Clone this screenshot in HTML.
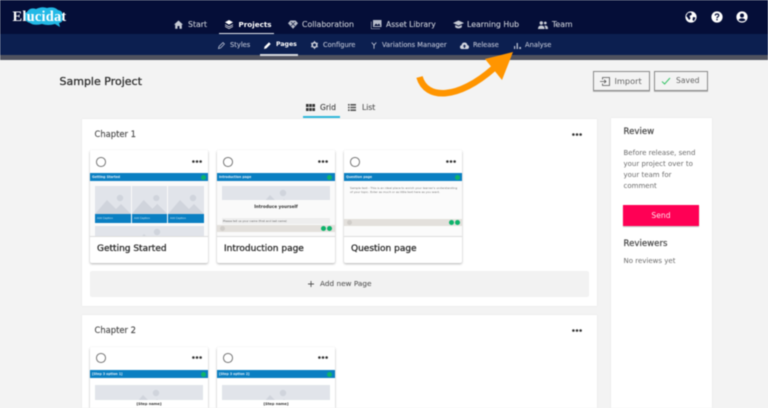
<!DOCTYPE html>
<html><head><meta charset="utf-8"><style>
html,body{margin:0;padding:0;width:768px;height:408px;overflow:hidden;background:#f3f3f3}
#r{position:relative;width:768px;height:408px;overflow:hidden;filter:blur(.45px);font-family:"DejaVu Sans","Liberation Sans",sans-serif;background:#f3f3f3}
#r div,#r span,#r svg{position:absolute}
.t{white-space:nowrap;line-height:12px;height:12px}
.n{font-size:7.8px;color:#c6cad4;-webkit-text-stroke:.12px #c6cad4}
.s{font-size:6.7px;color:#b8bed0;-webkit-text-stroke:.12px #b8bed0}
.card{background:#fff;box-shadow:0 0 2px rgba(0,0,0,.08)}
.pg{background:#fff;width:118px;border-radius:2px;box-shadow:0 1px 2px rgba(0,0,0,.3);overflow:hidden}
.ttl{font-size:9px;color:#2e2e2e;-webkit-text-stroke:.3px #2e2e2e}
.b{background:#0a7fc2;left:0;right:0;height:8px;top:23px}
.bt{font-size:3.2px;color:#dcebf6;left:2px;top:23px;line-height:8px;white-space:nowrap;font-weight:bold}
.gd{width:5px;height:5px;border-radius:50%;background:#0db36b}
.circ{width:7.6px;height:7.6px;border:1px solid #777;border-radius:50%;left:6px;top:7px}
.im{background:#e1e4ea;overflow:hidden}
.cap{background:#0a7fc2}
.ct{font-size:2.6px;line-height:9px;color:#cfe4f2;white-space:nowrap}
</style></head><body><div id="r">
<svg width="0" height="0" style="position:absolute"><defs>
<symbol id="ph" viewBox="0 0 36 27"><circle cx="25" cy="11" r="3.2" fill="#d0d4dc"/><path d="M0 27 L12 13 L21 22 L26 17 L36 27Z" fill="#d0d4dc"/></symbol>
<symbol id="dots" viewBox="0 0 10 3"><circle cx="1.4" cy="1.5" r="1.3" fill="#333"/><circle cx="5" cy="1.5" r="1.3" fill="#333"/><circle cx="8.6" cy="1.5" r="1.3" fill="#333"/></symbol>
</defs></svg>

<!-- top nav -->
<div style="left:0;top:0;width:768px;height:34px;background:#050e38"></div>
<div style="left:0;top:34px;width:768px;height:21px;background:#0c1f50"></div>
<div style="left:0;top:55px;width:768px;height:5px;background:#50525f"></div>

<!-- logo -->
<svg style="left:22px;top:6px" width="44" height="22" viewBox="0 0 44 22"><path d="M5 6 Q8 1 14 3 Q20 0 25 2 Q32 0 36 4 Q42 5 40 11 Q42 16 37 17 L38 21 L33 18 Q26 20 20 18 Q12 20 8 17 Q2 15 3 10 Q2 7 5 6Z" fill="#22b9e6"/></svg>
<span class="t" style="left:12.5px;top:9px;line-height:16px;height:16px;font:bold 14.4px/16px 'Liberation Serif',serif;color:#fff;letter-spacing:.25px">Elucidat</span>

<!-- main nav icons -->
<svg style="left:174px;top:20px" width="9" height="9" viewBox="0 0 9 9"><path d="M4.5 .5 L9 4.6 H7.8 V8.7 H5.5 V6 H3.5 V8.7 H1.2 V4.6 H0Z" fill="#c6cad4"/></svg>
<span class="t n" style="left:188px;top:18.5px">Start</span>
<svg style="left:225px;top:20px" width="8" height="9" viewBox="0 0 8 9"><path d="M4 0 L8 2.3 4 4.6 0 2.3Z M0 4.2 L4 6.4 8 4.2 8 5 4 7.2 0 5Z M0 6 L4 8.2 8 6 8 6.7 4 9 0 6.7Z" fill="#fff"/></svg>
<span class="t n" style="left:238.5px;top:18.5px;color:#fff;-webkit-text-stroke:0;font-weight:bold;font-size:7.2px">Projects</span>
<div style="left:219px;top:33px;width:55px;height:1px;background:#e3e5ea"></div>
<svg style="left:288px;top:20px" width="10" height="9" viewBox="0 0 10 9"><path d="M2.5 .5 H7.5 L10 3.2 5 8.8 0 3.2Z" fill="#b5bac8"/><path d="M3 2 L7 6 M7 2 L3 6" stroke="#050e38" stroke-width=".6"/></svg>
<span class="t n" style="left:302px;top:18.5px">Collaboration</span>
<svg style="left:371px;top:20px" width="11" height="9" viewBox="0 0 11 9"><path d="M2 0 H10.5 V7 H2Z" fill="#b5bac8"/><path d="M0 1.5 V9 H9" fill="none" stroke="#b5bac8"/><path d="M3 6 L5 3.5 6.5 5 8 3.5 9.5 6Z" fill="#050e38"/></svg>
<span class="t n" style="left:386px;top:18.5px;font-size:7.6px">Asset Library</span>
<svg style="left:453px;top:20px" width="11" height="9" viewBox="0 0 11 9"><path d="M5.5 .5 L11 3 5.5 5.5 0 3Z M2.2 5 L5.5 6.5 8.8 5 V7.2 Q5.5 9.6 2.2 7.2Z" fill="#c6cad4"/></svg>
<span class="t n" style="left:467px;top:18.5px">Learning Hub</span>
<svg style="left:538px;top:20.5px" width="10" height="8" viewBox="0 0 10 8"><circle cx="3.3" cy="2" r="1.7" fill="#c6cad4"/><circle cx="7.3" cy="2" r="1.4" fill="#c6cad4"/><path d="M0 8 Q0 4.5 3.3 4.5 Q6.6 4.5 6.6 8Z M7.4 8 Q7.4 5.6 6.5 4.6 Q10 4 10 8Z" fill="#c6cad4"/></svg>
<span class="t n" style="left:552px;top:18.5px">Team</span>

<!-- right icons -->
<svg style="left:685px;top:11px" width="12" height="12" viewBox="0 0 12 12"><circle cx="6" cy="6" r="5.6" fill="#fff"/><path d="M3 2 L6 1.5 7 3.5 4.5 5 5.5 7.5 4 9 2.5 6.5 1.2 5Z M8 6 L10.5 6.5 9 10 7.5 9Z" fill="#050e38"/></svg>
<svg style="left:711px;top:11px" width="12" height="12" viewBox="0 0 12 12"><circle cx="6" cy="6" r="5.6" fill="#fff"/><path d="M4.2 4.6 Q4.3 3 6 3 Q7.8 3 7.8 4.5 Q7.8 5.4 6.7 5.9 Q6 6.3 6 7.2" fill="none" stroke="#050e38" stroke-width="1.2"/><rect x="5.3" y="8" width="1.4" height="1.3" fill="#050e38"/></svg>
<svg style="left:736px;top:11px" width="12" height="12" viewBox="0 0 12 12"><circle cx="6" cy="6" r="5.6" fill="#fff"/><circle cx="6" cy="4.5" r="2" fill="#050e38"/><path d="M2.5 9.3 Q3.4 7.2 6 7.2 Q8.6 7.2 9.5 9.3 Q6 11.5 2.5 9.3Z" fill="#050e38"/></svg>

<!-- sub nav -->
<svg style="left:218px;top:41.5px" width="7" height="7" viewBox="0 0 7 7"><path d="M.5 6.5 L1 4.5 5 .6 6.4 2 2.5 6Z" fill="none" stroke="#b8bed0" stroke-width=".8"/></svg>
<span class="t s" style="left:230px;top:39px">Styles</span>
<svg style="left:264px;top:41.5px" width="7" height="7" viewBox="0 0 7 7"><path d="M0 7 L.6 4.6 5 .3 6.7 2 2.4 6.4Z" fill="#fff"/></svg>
<span class="t s" style="left:276px;top:39px;color:#fff;-webkit-text-stroke:0;font-weight:bold;font-size:6.2px">Pages</span>
<div style="left:260px;top:54px;width:38px;height:2px;background:#d6d8de"></div>
<svg style="left:311px;top:41px" width="7" height="8" viewBox="0 0 7 8"><circle cx="3.5" cy="4" r="2.3" fill="none" stroke="#c8ccd8" stroke-width="1.6"/><path d="M3.5 0 V1.5 M3.5 6.5 V8 M0 2 L1.3 2.8 M7 2 L5.7 2.8 M0 6 L1.3 5.2 M7 6 L5.7 5.2" stroke="#c8ccd8"/></svg>
<span class="t s" style="left:323px;top:39px">Configure</span>
<svg style="left:371px;top:41.5px" width="6" height="7" viewBox="0 0 6 7"><path d="M.7 .5 L3 3.2 5.3 .5 M3 3.2 V6.8" fill="none" stroke="#b8bed0" stroke-width=".9"/></svg>
<span class="t s" style="left:382px;top:39px;font-size:6.7px">Variations Manager</span>
<svg style="left:460px;top:41.5px" width="9" height="7" viewBox="0 0 9 7"><path d="M2 7 Q0 7 0 5 Q0 3.4 1.5 3.2 Q2 .5 4.5 .5 Q7 .5 7.3 3 Q9 3.3 9 5 Q9 7 7 7Z" fill="#d0d4de"/><path d="M4.5 2.5 L6.2 4.4 H5.1 V6 H3.9 V4.4 H2.8Z" fill="#0c1f50"/></svg>
<span class="t s" style="left:473px;top:39px;font-size:6.6px">Release</span>
<svg style="left:514px;top:41.5px" width="7" height="7" viewBox="0 0 7 7"><path d="M0 4 H1.2 V7 H0Z M2.6 1 H3.9 V7 H2.6Z M5.3 5 H7 V7 H5.3Z" fill="#b8bed0"/></svg>
<span class="t s" style="left:525px;top:39px;font-size:6.7px">Analyse</span>

<!-- title -->
<span class="t" style="left:59.5px;top:75px;font-size:11px;line-height:13px;height:13px;color:#2f2f2f;-webkit-text-stroke:.3px #2f2f2f">Sample Project</span>

<!-- buttons -->
<div style="left:593px;top:71px;width:55px;height:18px;border:1px solid #8a8a8a;box-shadow:0 1px 0 #bbb"></div>
<svg style="left:600px;top:76.5px" width="10" height="9" viewBox="0 0 10 9"><path d="M2.5 2.5 V.5 H9.5 V8.5 H2.5 V6.5 M0 4.5 H6 M4.2 2.8 L6 4.5 4.2 6.2" fill="none" stroke="#555" stroke-width=".8"/></svg>
<span class="t" style="left:614.5px;top:75px;font-size:8.2px;color:#666">Import</span>
<div style="left:654px;top:71px;width:52px;height:18px;border:1px solid #8a8a8a;box-shadow:0 1px 0 #bbb"></div>
<svg style="left:661px;top:77px" width="10" height="8" viewBox="0 0 10 8"><path d="M1 4.5 L3.6 7 9 1" fill="none" stroke="#3bc46a" stroke-width="1"/></svg>
<span class="t" style="left:676px;top:75px;font-size:7.6px;color:#666">Saved</span>

<!-- tabs -->
<svg style="left:306px;top:104px" width="9" height="7" viewBox="0 0 9 7"><path d="M0 0 H2.6 V3 H0Z M3.2 0 H5.8 V3 H3.2Z M6.4 0 H9 V3 H6.4Z M0 4 H2.6 V7 H0Z M3.2 4 H5.8 V7 H3.2Z M6.4 4 H9 V7 H6.4Z" fill="#333"/></svg>
<span class="t" style="left:320px;top:101.5px;font-size:7.6px;color:#444;-webkit-text-stroke:.15px #444">Grid</span>
<div style="left:303px;top:116px;width:37px;height:2px;background:#2fb8da"></div>
<svg style="left:348px;top:104px" width="8" height="7" viewBox="0 0 8 7"><path d="M0 0 H1.6 V1.6 H0Z M2.4 0 H8 V1.6 H2.4Z M0 2.7 H1.6 V4.3 H0Z M2.4 2.7 H8 V4.3 H2.4Z M0 5.4 H1.6 V7 H0Z M2.4 5.4 H8 V7 H2.4Z" fill="#555"/></svg>
<span class="t" style="left:362px;top:101.5px;font-size:7.6px;color:#555;-webkit-text-stroke:.1px #555">List</span>

<!-- chapter 1 -->
<div class="card" style="left:82px;top:119px;width:515px;height:187px"></div>
<span class="t" style="left:94.5px;top:127.5px;font-size:8.4px;color:#4a4a4a;-webkit-text-stroke:.15px #4a4a4a">Chapter 1</span>
<svg style="left:572px;top:133px" width="10" height="3"><use href="#dots"/></svg>

<!-- page 1 -->
<div class="pg" style="left:90px;top:150px;height:113px">
<div class="circ"></div>
<svg style="left:102px;top:10px" width="10" height="3"><use href="#dots"/></svg>
<div class="b"></div><span class="bt">Getting Started</span><div class="gd" style="left:111px;top:24.5px"></div>
<div style="left:0;right:0;top:31px;height:55px;background:#fafafa;overflow:hidden">
<div class="im" style="left:5px;top:5px;width:36px;height:28px"><svg style="left:0;top:1px" width="36" height="27"><use href="#ph"/></svg></div>
<div class="im" style="left:42px;top:5px;width:35px;height:28px"><svg style="left:0;top:1px" width="35" height="27"><use href="#ph"/></svg></div>
<div class="im" style="left:78px;top:5px;width:36px;height:28px"><svg style="left:0;top:1px" width="36" height="27"><use href="#ph"/></svg></div>
<div class="cap" style="left:5px;top:33px;width:36px;height:9px"><span class="ct" style="left:2px;top:0">Add Caption</span></div>
<div class="cap" style="left:42px;top:33px;width:35px;height:9px"><span class="ct" style="left:2px;top:0">Add Caption</span></div>
<div class="cap" style="left:78px;top:33px;width:36px;height:9px"><span class="ct" style="left:2px;top:0">Add Caption</span></div>
<div class="im" style="left:5px;top:45px;width:109px;height:12px"><svg style="left:37px;top:-5px" width="36" height="27"><use href="#ph"/></svg></div>
</div>
<div style="left:0;right:0;top:86px;height:1px;background:#ddd"></div>
<span class="t ttl" style="left:7px;top:93px">Getting Started</span>
</div>

<!-- page 2 -->
<div class="pg" style="left:217px;top:150px;height:113px">
<div class="circ"></div>
<svg style="left:101px;top:10px" width="10" height="3"><use href="#dots"/></svg>
<div class="b"></div><span class="bt">Introduction page</span><div class="gd" style="left:110px;top:24.5px"></div>
<div style="left:0;right:0;top:31px;height:55px;background:#fafafa;overflow:hidden">
<div class="im" style="left:5px;top:5px;width:108px;height:14px"><svg style="left:36px;top:-4px" width="36" height="27"><use href="#ph"/></svg></div>
<span style="left:0;width:118px;text-align:center;top:23px;font-size:4.2px;line-height:6px;font-weight:bold;color:#333">Introduce yourself</span>
<div style="left:5px;top:37px;width:108px;height:6px;background:#eee"></div>
<span style="left:6px;top:37.5px;font-size:2.8px;line-height:5px;color:#666;white-space:nowrap">Please tell us your name (first and last name)</span>
<div style="left:0;top:44px;width:118px;height:7px;background:#e3e0dc"></div>
<div style="left:3px;top:45px;width:5px;height:5px;border-radius:50%;background:#d0cdc9"></div>
<div class="gd" style="left:103.5px;top:45px"></div><div class="gd" style="left:109.5px;top:45px"></div>
</div>
<div style="left:0;right:0;top:86px;height:1px;background:#ddd"></div>
<span class="t ttl" style="left:7px;top:93px">Introduction page</span>
</div>

<!-- page 3 -->
<div class="pg" style="left:344px;top:150px;height:113px">
<div class="circ"></div>
<svg style="left:102px;top:10px" width="10" height="3"><use href="#dots"/></svg>
<div class="b"></div><span class="bt">Question page</span><div class="gd" style="left:111px;top:24.5px"></div>
<div style="left:0;right:0;top:31px;height:55px;background:#fbfbfb;overflow:hidden">
<span style="left:6px;top:6px;width:108px;font-size:2.9px;line-height:3.8px;color:#777">Sample text - This is an ideal place to enrich your learner's understanding of your topic. Enter as much or as little text here as you want.</span>
<div style="left:0;top:38px;width:118px;height:7px;background:#e3e0dc"></div>
<div style="left:3px;top:39px;width:5px;height:5px;border-radius:50%;background:#d0cdc9"></div>
<div class="gd" style="left:105px;top:39px"></div><div class="gd" style="left:111px;top:39px"></div>
</div>
<div style="left:0;right:0;top:86px;height:1px;background:#ddd"></div>
<span class="t ttl" style="left:7px;top:93px">Question page</span>
</div>

<!-- add page -->
<div style="left:90px;top:271px;width:499px;height:26px;background:#f2f2f2;border-radius:2px"></div>
<svg style="left:307px;top:280px" width="8" height="8"><path d="M4 1 V7 M1 4 H7" stroke="#555" stroke-width=".9"/></svg>
<span class="t" style="left:320px;top:278px;font-size:7.3px;color:#5c5c5c;-webkit-text-stroke:.1px #5c5c5c">Add new Page</span>

<!-- chapter 2 -->
<div class="card" style="left:82px;top:315px;width:515px;height:100px"></div>
<span class="t" style="left:94.5px;top:324px;font-size:8.4px;color:#4a4a4a;-webkit-text-stroke:.15px #4a4a4a">Chapter 2</span>
<svg style="left:572px;top:329px" width="10" height="3"><use href="#dots"/></svg>

<div class="pg" style="left:90px;top:347px;height:70px">
<div class="circ" style="top:6px"></div>
<svg style="left:102px;top:9px" width="10" height="3"><use href="#dots"/></svg>
<div class="b"></div><span class="bt">[Step 3 option 1]</span><div class="gd" style="left:111px;top:24.5px"></div>
<div class="im" style="left:5px;top:38px;width:108px;height:15px"><svg style="left:36px;top:-3px" width="36" height="27"><use href="#ph"/></svg></div>
<span style="left:0;width:118px;text-align:center;top:54px;font-size:3.6px;line-height:6px;font-weight:bold;color:#333">[Step name]</span>
</div>
<div class="pg" style="left:217px;top:347px;height:70px">
<div class="circ" style="top:6px"></div>
<svg style="left:101px;top:9px" width="10" height="3"><use href="#dots"/></svg>
<div class="b"></div><span class="bt">[Step 3 option 2]</span><div class="gd" style="left:110px;top:24.5px"></div>
<div class="im" style="left:5px;top:38px;width:108px;height:15px"><svg style="left:36px;top:-3px" width="36" height="27"><use href="#ph"/></svg></div>
<span style="left:0;width:118px;text-align:center;top:54px;font-size:3.6px;line-height:6px;font-weight:bold;color:#333">[Step name]</span>
</div>

<!-- sidebar -->
<div class="card" style="left:611px;top:118px;width:101px;height:300px"></div>
<span class="t" style="left:623.5px;top:126px;font-size:8.6px;color:#484848;-webkit-text-stroke:.2px #484848">Review</span>
<span class="t" style="left:623.5px;top:147px;font-size:7px;color:#6c6c6c">Before release, send</span>
<span class="t" style="left:623.5px;top:158px;font-size:7px;color:#6c6c6c">your project over to</span>
<span class="t" style="left:623.5px;top:169px;font-size:7px;color:#6c6c6c">your team for</span>
<span class="t" style="left:623.5px;top:180px;font-size:7px;color:#6c6c6c">comment</span>
<div style="left:623px;top:205px;width:76px;height:21px;background:#ff0055;box-shadow:0 1px 1px rgba(0,0,0,.25)"></div>
<span class="t" style="left:623px;width:76px;text-align:center;top:209.5px;font-size:7.6px;color:#ffe3ec">Send</span>
<span class="t" style="left:623.5px;top:238px;font-size:8.6px;color:#484848;-webkit-text-stroke:.2px #484848">Reviewers</span>
<span class="t" style="left:623.5px;top:255px;font-size:7px;color:#6c6c6c">No reviews yet</span>

<!-- arrow -->
<svg style="left:410px;top:45px" width="112" height="60" viewBox="410 45 112 60"><path d="M419.5 77 C426 100 458 100 494 68" fill="none" stroke="#ff9500" stroke-width="6.5"/><path d="M513 52 L485 59 502 80Z" fill="#ff9500"/></svg>
</div></body></html>
